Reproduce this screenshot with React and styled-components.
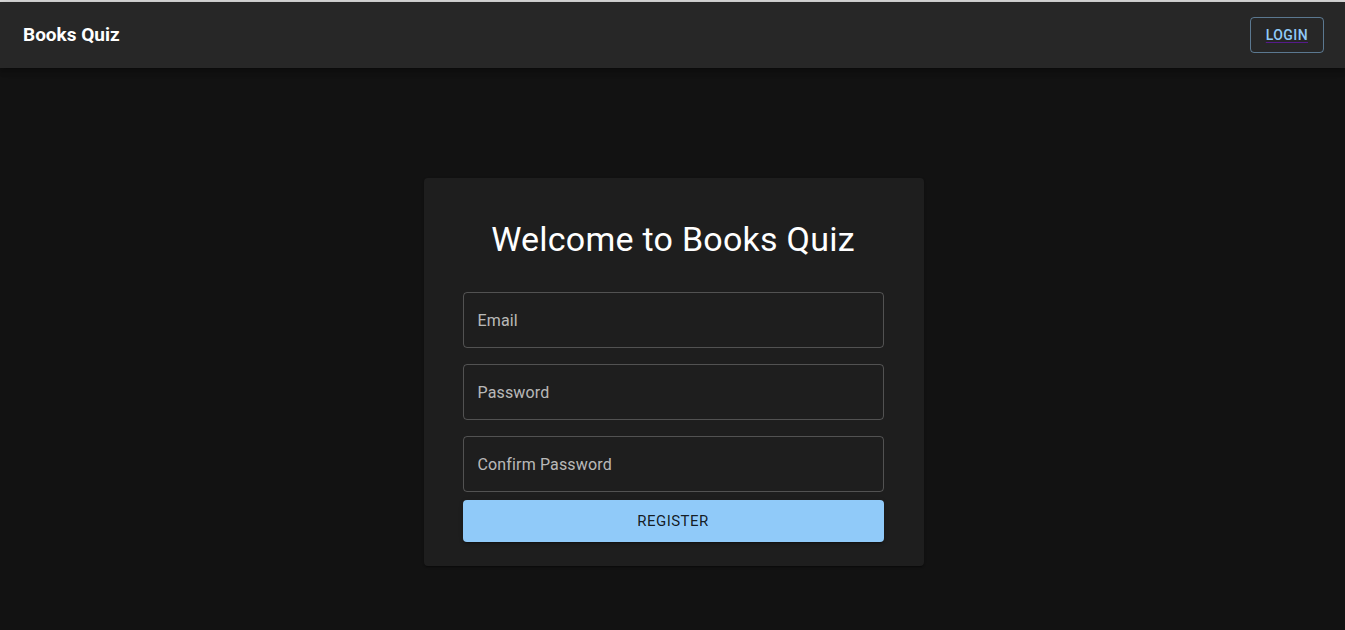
import React from 'react';
import styled, { createGlobalStyle } from 'styled-components';

const GlobalStyle = createGlobalStyle`
  html, body {
    margin: 0;
    padding: 0;
    background: #121212;
    font-family: Roboto, "Liberation Sans", Arial, sans-serif;
    color: #fff;
  }
  * { box-sizing: border-box; }
`;

const Page = styled.div`
  min-height: 630px;
  border-top: 2px solid #d9d9d9;
  display: flex;
  flex-direction: column;
`;

const TopBar = styled.header`
  height: 66px;
  background: #272727;
  box-shadow: 0 2px 4px -1px rgba(0,0,0,0.2), 0 4px 5px 0 rgba(0,0,0,0.14), 0 1px 10px 0 rgba(0,0,0,0.12);
  display: flex;
  align-items: center;
  justify-content: space-between;
  padding: 0 21px 0 23px;
`;

const Brand = styled.div`
  font-size: 19px;
  font-weight: 700;
  line-height: 1;
  margin-top: -2px;
`;

const OutlinedButton = styled.button`
  height: 36px;
  padding: 0 15px;
  margin-top: -1px;
  background: transparent;
  border: 1px solid rgba(144, 202, 249, 0.5);
  border-radius: 4px;
  font-family: inherit;
  font-size: 14px;
  font-weight: 500;
  letter-spacing: 0.4px;
  color: #90caf9;
  text-decoration: underline;
  text-decoration-color: #551a8b;
  text-decoration-thickness: 1px;
  text-underline-offset: 2px;
  cursor: pointer;
`;

const Main = styled.main`
  flex: 1;
  display: flex;
  justify-content: center;
  align-items: flex-start;
  padding: 110px 0 0 2px;
`;

const Card = styled.section`
  width: 500px;
  background: #1e1e1e;
  border-radius: 4px;
  box-shadow: 0 2px 1px -1px rgba(0,0,0,0.2), 0 1px 1px 0 rgba(0,0,0,0.14), 0 1px 3px 0 rgba(0,0,0,0.12);
  padding: 40px 40px 24px 39px;
  display: flex;
  flex-direction: column;
`;

const Title = styled.h1`
  margin: 0 0 32px;
  font-size: 34px;
  font-weight: 400;
  line-height: 42px;
  text-align: center;
  letter-spacing: 0.25px;
`;

const Form = styled.form`
  display: flex;
  flex-direction: column;
`;

const Field = styled.input`
  height: 56px;
  width: 100%;
  margin-bottom: ${p => (p.$last ? '8px' : '16px')};
  padding: 0 14px;
  background: transparent;
  border: 1px solid rgba(255, 255, 255, 0.23);
  border-radius: 4px;
  font-family: inherit;
  font-size: 16px;
  letter-spacing: 0.15px;
  color: #fff;
  outline: none;
  &::placeholder {
    color: rgba(255, 255, 255, 0.7);
  }
`;

const SubmitButton = styled.button`
  height: 42px;
  width: 100%;
  border: none;
  border-radius: 4px;
  background: #90caf9;
  color: rgba(0, 0, 0, 0.87);
  font-family: inherit;
  font-size: 15px;
  font-weight: 400;
  letter-spacing: 0.46px;
  text-transform: uppercase;
  box-shadow: 0 3px 1px -2px rgba(0,0,0,0.2), 0 2px 2px 0 rgba(0,0,0,0.14), 0 1px 5px 0 rgba(0,0,0,0.12);
  cursor: pointer;
`;

const App = () => {
  const onSubmitHandler = e => {
    e.preventDefault();
  };

  return (
    <>
      <GlobalStyle />
      <Page>
        <TopBar>
          <Brand>Books Quiz</Brand>
          <OutlinedButton type="button">LOGIN</OutlinedButton>
        </TopBar>
        <Main>
          <Card>
            <Title>Welcome to Books Quiz</Title>
            <Form onSubmit={onSubmitHandler}>
              <Field type="email" placeholder="Email" />
              <Field type="password" placeholder="Password" />
              <Field type="password" placeholder="Confirm Password" $last />
              <SubmitButton type="submit">Register</SubmitButton>
            </Form>
          </Card>
        </Main>
      </Page>
    </>
  );
};

export default App;
